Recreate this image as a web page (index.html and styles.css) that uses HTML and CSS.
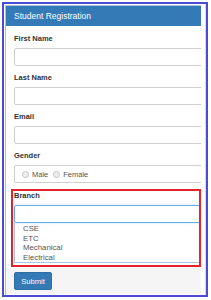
FILE: index.html
```html
<!DOCTYPE html>
<html lang="en">
<head>
    <meta charset="UTF-8">
    <title>Student Registration</title>
    <link rel="stylesheet" href="styles.css">
</head>
<body>
    <div class="frame">
        <div class="panel">
            <div class="panel-heading">Student Registration</div>
            <div class="panel-body">
                <div class="form-group">
                    <label>First Name</label>
                    <div class="field"></div>
                </div>
                <div class="form-group">
                    <label>Last Name</label>
                    <div class="field"></div>
                </div>
                <div class="form-group">
                    <label>Email</label>
                    <div class="field"></div>
                </div>
                <div class="form-group">
                    <label>Gender</label>
                    <div class="field radios">
                        <span class="radio"></span><span class="radio-text">Male</span>
                        <span class="radio"></span><span class="radio-text">Female</span>
                    </div>
                </div>
                <!-- highlighted branch select -->
                <div class="branch">
                    <label>Branch</label>
                    <div class="combo"></div>
                    <ul class="options">
                        <li>CSE</li>
                        <li>ETC</li>
                        <li>Mechanical</li>
                        <li>Electrical</li>
                    </ul>
                </div>
            </div>
            <div class="panel-footer">
                <button class="btn-submit">Submit</button>
            </div>
        </div>
    </div>
</body>
</html>
```

FILE: styles.css
```css
body {
    margin: 0;
    background: white;
    font-family: "Liberation Sans", Arial, sans-serif;
    color: #333;
}
.frame {
    box-sizing: border-box;
    width: 206px;
    height: 295px;
    margin: 2px 0 0 2px;
    border: 2px solid #4b4bd6;
    padding: 1px 0 0 1px;
    box-shadow: inset -1px 0 0 #dcdcdc;
}
.panel {
    width: 196px;
    height: 290px;
    border-left: 1px solid #a9c3e0;
    border-top: 1px solid #a9c3e0;
    box-sizing: border-box;
    overflow: hidden;
    display: flex;
    flex-direction: column;
}
.panel-heading {
    background-color: #337ab7;
    color: white;
    height: 20px;
    line-height: 20px;
    padding-left: 8px;
    font-size: 8.5px;
}
.panel-body {
    padding: 8px 0 0 8px;
    flex: 1;
}
.form-group {
    margin-bottom: 7px;
}
label {
    display: block;
    font-weight: bold;
    font-size: 7.5px;
    line-height: 10px;
    margin-bottom: 4px;
}
.field {
    box-sizing: border-box;
    width: 200px;
    height: 18px;
    border: 1px solid #cfcfcf;
    border-radius: 2px;
}
.radios {
    display: flex;
    align-items: center;
    padding-left: 7px;
    font-size: 7.5px;
    color: #555;
}
.radio {
    width: 5px;
    height: 5px;
    border: 1px solid #c4c4c4;
    border-radius: 50%;
    background: #eee;
    margin-right: 3px;
}
.radio-text {
    margin-right: 5px;
}
.branch {
    box-sizing: border-box;
    width: 190px;
    margin: -1px 0 0 -3px;
    border: 2px solid #e5212b;
    padding: 0 0 2px 1px;
    overflow: hidden;
}
.combo {
    box-sizing: border-box;
    width: 200px;
    height: 18px;
    border: 1px solid #66afe9;
    border-radius: 2px;
    box-shadow: 0 0 2px rgba(102, 175, 233, 0.5);
}
.options {
    list-style: none;
    margin: 0;
    padding: 1px 0 0 8px;
    width: 200px;
    border: 1px solid #a7c6e6;
    border-top: none;
    font-size: 7.8px;
    line-height: 9.5px;
    color: #555;
}
.panel-footer {
    background-color: #f5f5f5;
    height: 26px;
    padding: 4px 0 0 8px;
    box-sizing: border-box;
    margin-bottom: 1px;
}
.btn-submit {
    display: block;
    width: 38px;
    height: 18px;
    padding: 0;
    border: 1px solid #2e6da4;
    border-radius: 2px;
    background-color: #337ab7;
    color: white;
    font-family: "Liberation Sans", Arial, sans-serif;
    font-size: 7.6px;
}
```
